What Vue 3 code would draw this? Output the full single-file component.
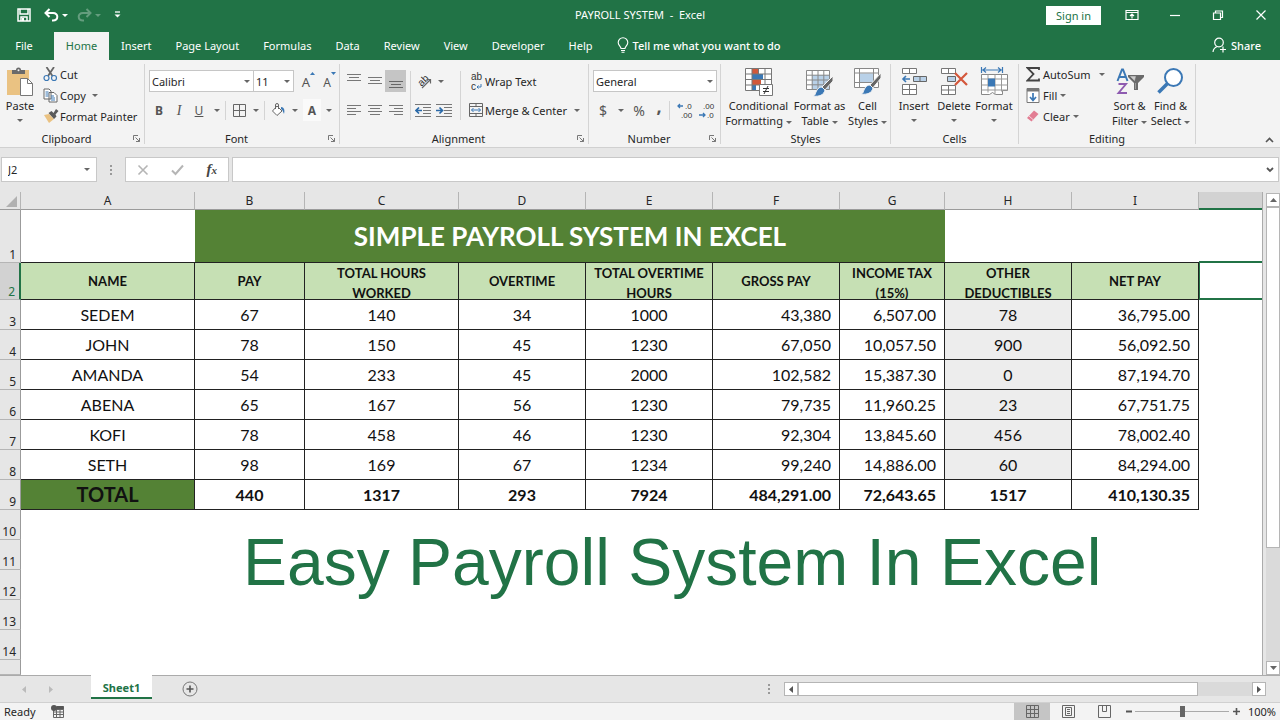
<script setup>
import { ref } from 'vue'

const tabs = ['Insert', 'Page Layout', 'Formulas', 'Data', 'Review', 'View', 'Developer', 'Help']

const columns = ['A', 'B', 'C', 'D', 'E', 'F', 'G', 'H', 'I']

const headings = [
  'NAME', 'PAY', 'TOTAL HOURS WORKED', 'OVERTIME', 'TOTAL OVERTIME HOURS',
  'GROSS PAY', 'INCOME TAX (15%)', 'OTHER DEDUCTIBLES', 'NET PAY',
]

const employees = [
  ['SEDEM', '67', '140', '34', '1000', '43,380', '6,507.00', '78', '36,795.00'],
  ['JOHN', '78', '150', '45', '1230', '67,050', '10,057.50', '900', '56,092.50'],
  ['AMANDA', '54', '233', '45', '2000', '102,582', '15,387.30', '0', '87,194.70'],
  ['ABENA', '65', '167', '56', '1230', '79,735', '11,960.25', '23', '67,751.75'],
  ['KOFI', '78', '458', '46', '1230', '92,304', '13,845.60', '456', '78,002.40'],
  ['SETH', '98', '169', '67', '1234', '99,240', '14,886.00', '60', '84,294.00'],
]

const totals = ['TOTAL', '440', '1317', '293', '7924', '484,291.00', '72,643.65', '1517', '410,130.35']

const emptyRows = [10, 11, 12, 13, 14]

const cellRef = ref('J2')
const formula = ref('')
const zoom = ref(50)

// money columns are right aligned, H is shaded
function cellClass(i) {
  return { money: i === 5 || i === 6 || i === 8, shaded: i === 7 }
}
</script>

<template>
  <div class="excel">
    <header class="title-bar">
      <div class="quick-access">
        <button type="button" aria-label="Save">
          <svg width="14" height="14" viewBox="0 0 14 14"><path d="M1 1h12v12H1zM3 1v5h8V1M4 13V9h6v4" fill="none" stroke="#fff" stroke-width="1.500" /><path d="M5 10h2v3H5z" fill="#fff" /></svg>
        </button>
        <button type="button" class="with-caret" aria-label="Undo">
          <svg width="15" height="14" viewBox="0 0 15 14"><path d="M5.500 1L1.500 5l4 4M2 5h7c6 0 5.500 7.500 0 7.500H8" fill="none" stroke="#fff" stroke-width="2" /></svg>
          <i class="caret light"></i>
        </button>
        <button type="button" class="with-caret faded" aria-label="Redo">
          <svg width="15" height="14" viewBox="0 0 15 14"><path d="M9.500 1l4 4-4 4M13 5H6C0 5 .5 12.500 6 12.500h1" fill="none" stroke="#fff" stroke-width="2" /></svg>
          <i class="caret light"></i>
        </button>
        <button type="button" aria-label="Customize toolbar">
          <svg width="7" height="8" viewBox="0 0 7 8"><path d="M1 1h5" stroke="#fff" stroke-width="1.300" /><path d="M.5 3.500h6l-3 3z" fill="#fff" /></svg>
        </button>
      </div>
      <div class="doc-title">PAYROLL SYSTEM&nbsp; -&nbsp; Excel</div>
      <div class="window-controls">
        <button type="button" class="sign-in">Sign in</button>
        <button type="button" class="win" aria-label="Ribbon display options">
          <svg width="14" height="12" viewBox="0 0 14 12"><path d="M1 1.500h12v9H1zM1 3.500h12M7 9.500V5M5 7l2-2 2 2" fill="none" stroke="#fff" stroke-width="1.200" /></svg>
        </button>
        <button type="button" class="win" aria-label="Minimize">
          <svg width="12" height="12" viewBox="0 0 12 12"><path d="M1 6.500h10" stroke="#fff" stroke-width="1.200" /></svg>
        </button>
        <button type="button" class="win" aria-label="Restore">
          <svg width="12" height="12" viewBox="0 0 12 12"><path d="M1.500 4h7v6.500h-7zM3.500 4V2h7v6.500h-2" fill="none" stroke="#fff" stroke-width="1.200" /></svg>
        </button>
        <button type="button" class="win" aria-label="Close">
          <svg width="12" height="12" viewBox="0 0 12 12"><path d="M1.500 1.500l9 9M10.500 1.500l-9 9" stroke="#fff" stroke-width="1.200" /></svg>
        </button>
      </div>
    </header>

    <nav class="tabs">
      <button type="button" class="tab file">File</button>
      <button type="button" class="tab active">Home</button>
      <button v-for="tab in tabs" :key="tab" type="button" class="tab">{{ tab }}</button>
      <button type="button" class="tab tell-me">
        <svg width="12" height="16" viewBox="0 0 12 16"><path d="M4 11.500c0-2-2.800-3-2.800-6a4.800 4.800 0 0 1 9.600 0c0 3-2.800 4-2.800 6zM4 13.500h4M4.500 15.300h3" fill="none" stroke="#fff" stroke-width="1.100" /></svg>
        Tell me what you want to do
      </button>
      <button type="button" class="tab share">
        <svg width="15" height="16" viewBox="0 0 15 16"><circle cx="7" cy="5.500" r="4.300" fill="none" stroke="#fff" stroke-width="1.200" /><path d="M1 15c.3-3 2-4.800 4.500-5.500M8 12.500h6M11 9.500v6" fill="none" stroke="#fff" stroke-width="1.200" /></svg>
        Share
      </button>
    </nav>

    <section class="ribbon">
      <div class="group clipboard">
        <div class="group-body">
          <button type="button" class="big">
            <svg width="28" height="30" viewBox="0 0 28 30"><path d="M1 3h22v25H1z" fill="#eac282" /><path d="M6 3h4a2.500 2.500 0 0 1 5 0h4v4H6z" fill="#6a6a6a" /><circle cx="12.500" cy="3.300" r="1" fill="#f3f3f3" /><path d="M14.500 11.500h7l5 5v12h-12z" fill="#fff" stroke="#777" /><path d="M21.500 11.500v5h5" fill="none" stroke="#777" /></svg>
            <span>Paste</span>
            <i class="caret"></i>
          </button>
          <div class="stack">
            <button type="button" class="small">
              <svg width="16" height="15" viewBox="0 0 16 15"><path d="M3.500 0l6 9M11 0L5 9" stroke="#666" stroke-width="1.800" /><circle cx="3.500" cy="11" r="2.500" fill="none" stroke="#3b78b5" stroke-width="1.200" /><circle cx="11" cy="11" r="2.500" fill="none" stroke="#3b78b5" stroke-width="1.200" /></svg>
              Cut
            </button>
            <button type="button" class="small">
              <svg width="16" height="15" viewBox="0 0 16 15"><path d="M1 1h5l2 2v8H1zM6 4.500h5l3 3V14H6z" fill="#fff" stroke="#666" /><path d="M2.500 4h3M2.500 6h3M2.500 8h3M8 8h3M8 10h4M8 12h4" stroke="#3b78b5" /></svg>
              Copy <i class="caret gap"></i>
            </button>
            <button type="button" class="small">
              <svg width="16" height="15" viewBox="0 0 16 15"><path d="M1 6l5-1 5 5-5 4z" fill="#eac282" /><path d="M5.500 4l3-2 2 2L13 0l2.500 2-3 3.500 1 2-2.500 2.500z" fill="#5a5a5a" /></svg>
              Format Painter
            </button>
          </div>
        </div>
        <div class="group-label"><span>Clipboard</span><svg class="launcher" width="7" height="7" viewBox="0 0 7 7"><path d="M.5 5V.5H5M2.500 2.500l4 4M6.500 3v3.500H3" fill="none" stroke="#777" /></svg></div>
      </div>

      <div class="group font">
        <div class="group-body rows">
          <div class="tool-row">
            <label class="combo face"><select aria-label="Font"><option>Calibri</option></select><i class="caret"></i></label>
            <label class="combo size"><select aria-label="Font size"><option>11</option></select><i class="caret"></i></label>
            <button type="button" class="tool grow">A<svg width="5" height="3" viewBox="0 0 5 3"><path d="M0 3h5L2.500 0z" fill="#3b78b5" /></svg></button>
            <button type="button" class="tool shrink">A<svg width="5" height="3" viewBox="0 0 5 3"><path d="M0 0h5L2.500 3z" fill="#3b78b5" /></svg></button>
          </div>
          <div class="tool-row">
            <button type="button" class="tool"><b>B</b></button>
            <button type="button" class="tool serif"><em>I</em></button>
            <button type="button" class="tool"><u>U</u></button>
            <i class="caret drop"></i>
            <i class="rule"></i>
            <button type="button" class="tool wide" aria-label="Borders"><svg width="13" height="13" viewBox="0 0 13 13"><path d="M.5.5h12v12H.5zM6.500.5v12M.5 6.500h12" fill="none" stroke="#666" /></svg></button>
            <i class="caret drop"></i>
            <i class="rule"></i>
            <button type="button" class="tool wide" aria-label="Fill color"><svg width="15" height="14" viewBox="0 0 15 14"><path d="M6 3l5 5-5 4.500L1.500 8z" fill="#fff" stroke="#666" /><path d="M4.500 6V2a1.500 1.500 0 0 1 3 0v4" fill="none" stroke="#666" /><path d="M10 4c3 0 4 3 3 7-1-2-1-4-3-5z" fill="#3b78b5" /></svg></button>
            <i class="caret drop"></i>
            <button type="button" class="tool wide font-color"><b>A</b></button>
            <i class="caret drop"></i>
          </div>
        </div>
        <div class="group-label"><span>Font</span><svg class="launcher" width="7" height="7" viewBox="0 0 7 7"><path d="M.5 5V.5H5M2.500 2.500l4 4M6.500 3v3.500H3" fill="none" stroke="#777" /></svg></div>
      </div>

      <div class="group alignment">
        <div class="group-body">
          <div class="align-grid">
            <button type="button" aria-label="Top align"><svg width="14" height="14" viewBox="0 0 14 14"><path d="M0 .5h14M2 3.500h10M0 6.500h14" stroke="#777" /></svg></button>
            <button type="button" aria-label="Middle align"><svg width="14" height="14" viewBox="0 0 14 14"><path d="M0 3.500h14M2 6.500h10M0 9.500h14" stroke="#777" /></svg></button>
            <button type="button" class="on" aria-label="Bottom align"><svg width="14" height="14" viewBox="0 0 14 14"><path d="M0 7.500h14M2 10.500h10M0 13.500h14" stroke="#666" /></svg></button>
            <button type="button" aria-label="Align left"><svg width="14" height="12" viewBox="0 0 14 12"><path d="M0 1.500h14M0 4.500h9M0 7.500h14M0 10.500h9" stroke="#777" /></svg></button>
            <button type="button" aria-label="Center"><svg width="14" height="12" viewBox="0 0 14 12"><path d="M0 1.500h14M2 4.500h10M0 7.500h14M2 10.500h10" stroke="#777" /></svg></button>
            <button type="button" aria-label="Align right"><svg width="14" height="12" viewBox="0 0 14 12"><path d="M0 1.500h14M5 4.500h9M0 7.500h14M5 10.500h9" stroke="#777" /></svg></button>
          </div>
          <i class="rule tall"></i>
          <div class="indent-col">
            <div class="tool-row">
              <button type="button" class="orient"><svg width="18" height="18" viewBox="0 0 18 18"><text x="3" y="12" transform="rotate(-45 8 9)">ab</text><path d="M7 16l8-8M11.500 7.500h4v4" fill="none" stroke="#666" stroke-width="1.200" /></svg></button>
              <i class="caret"></i>
            </div>
            <div class="tool-row">
              <button type="button" aria-label="Decrease indent"><svg width="16" height="13" viewBox="0 0 16 13"><path d="M0 .5h16M8 3.500h8M8 6.500h8M8 9.500h8M0 12.500h16" stroke="#777" /><path d="M7 6.500H1.500M4 3.500l-3 3 3 3" fill="none" stroke="#2a69a8" stroke-width="1.700" /></svg></button>
              <button type="button" aria-label="Increase indent"><svg width="16" height="13" viewBox="0 0 16 13"><path d="M0 .5h16M8 3.500h8M8 6.500h8M8 9.500h8M0 12.500h16" stroke="#777" /><path d="M0 6.500h6M3.500 3.500l3 3-3 3" fill="none" stroke="#2a69a8" stroke-width="1.700" /></svg></button>
            </div>
          </div>
          <i class="rule tall"></i>
          <div class="wrap-col">
            <button type="button" class="small">
              <svg class="glyph-icon" width="14" height="21" viewBox="0 0 14 21"><text x="2" y="9">ab</text><text x="2" y="19">c</text><path d="M12 13v3H8M9.500 14.500L8 16l1.500 1.500" fill="none" stroke="#3b78b5" /></svg>
              Wrap Text
            </button>
            <button type="button" class="small">
              <svg width="14" height="14" viewBox="0 0 14 14"><path d="M.5.5h13v13H.5zM.5 3.500h13M.5 10.500h13M7 .5v3M7 10.500v3" fill="none" stroke="#666" /><path d="M2.500 7h9M4.500 5l-2 2 2 2M9.500 5l2 2-2 2" fill="none" stroke="#3b78b5" /></svg>
              Merge &amp; Center <i class="caret gap"></i>
            </button>
          </div>
        </div>
        <div class="group-label"><span>Alignment</span><svg class="launcher" width="7" height="7" viewBox="0 0 7 7"><path d="M.5 5V.5H5M2.500 2.500l4 4M6.500 3v3.500H3" fill="none" stroke="#777" /></svg></div>
      </div>

      <div class="group number">
        <div class="group-body rows">
          <div class="tool-row">
            <label class="combo format"><select aria-label="Number format"><option>General</option></select><i class="caret"></i></label>
          </div>
          <div class="tool-row">
            <button type="button" class="tool big-glyph">$</button>
            <i class="caret drop"></i>
            <button type="button" class="tool big-glyph">%</button>
            <button type="button" class="tool big-glyph comma"><b>,</b></button>
            <i class="rule"></i>
            <button type="button" class="tool decimal" aria-label="Increase decimal"><svg class="small-glyph" width="16" height="20" viewBox="0 0 16 20"><path d="M6 6H1M3 4L1 6l2 2" fill="none" stroke="#3b78b5" stroke-width="1.300" /><text x="8" y="9">.0</text><text x="4" y="18">.00</text></svg></button>
            <button type="button" class="tool decimal" aria-label="Decrease decimal"><svg class="small-glyph" width="16" height="20" viewBox="0 0 16 20"><path d="M0 15h6M4 13l2 2-2 2" fill="none" stroke="#3b78b5" stroke-width="1.300" /><text x="4" y="9">.00</text><text x="8" y="18">.0</text></svg></button>
          </div>
        </div>
        <div class="group-label"><span>Number</span><svg class="launcher" width="7" height="7" viewBox="0 0 7 7"><path d="M.5 5V.5H5M2.500 2.500l4 4M6.500 3v3.500H3" fill="none" stroke="#777" /></svg></div>
      </div>

      <div class="group styles">
        <div class="group-body">
          <button type="button" class="big">
            <svg width="30" height="30" viewBox="0 0 30 30"><path d="M1.500 1.500h26v22h-26z" fill="#fff" /><path d="M8 1.500h6v5.500H8zM8 13h9v5H8z" fill="#d1583a" /><path d="M8 7h11v6H8zM8 18h4v5.500H8z" fill="#3b78b5" /><path d="M1.500 1.500h26v22h-26zM8 1.500v22M14.500 1.500v5.500M21 1.500v22M1.500 7h26M1.500 12.500h26M1.500 18h26" fill="none" stroke="#777" /><path d="M15.500 17.500h13v11h-13z" fill="#fff" stroke="#777" /><path d="M19 21.500h6M19 24.500h6M24 19l-4 8" stroke="#333" /></svg>
            <span>Conditional</span>
            <span>Formatting <i class="caret"></i></span>
          </button>
          <button type="button" class="big">
            <svg width="30" height="30" viewBox="0 0 30 30"><path d="M1.500 3.500h23v19h-23z" fill="#fff" /><path d="M7 8h18v15H7z" fill="#b9d1e8" /><path d="M1.500 3.500h23v19h-23zM7.200 3.500v19M13 3.500v19M18.800 3.500v19M1.500 8.200h23M1.500 13h23M1.500 17.800h23" fill="none" stroke="#888" /><path d="M28 9v5l-9 10-3-3z" fill="#666" stroke="#f3f3f3" /><path d="M17 20l3 3c-1 5-6 7-12 6 3-1 2-3 4-6 1-2 3-3 5-3z" fill="#3b78b5" stroke="#f3f3f3" /></svg>
            <span>Format as</span>
            <span>Table <i class="caret"></i></span>
          </button>
          <button type="button" class="big">
            <svg width="30" height="30" viewBox="0 0 30 30"><path d="M1.500 1.500h24v19h-24z" fill="#fff" /><path d="M6.500 6.500h14v9h-14z" fill="#b9d1e8" /><path d="M1.500 1.500h24v19h-24zM6.500 1.500v19M20.500 1.500v19M1.500 6h24M1.500 15.500h24" fill="none" stroke="#888" /><path d="M28 6v5l-9 11-3-3z" fill="#666" stroke="#f3f3f3" /><path d="M17 18l3 3c-1 5-6 7-12 6 3-1 2-3 4-6 1-2 3-3 5-3z" fill="#3b78b5" stroke="#f3f3f3" /></svg>
            <span>Cell</span>
            <span>Styles <i class="caret"></i></span>
          </button>
        </div>
        <div class="group-label"><span>Styles</span></div>
      </div>

      <div class="group cells">
        <div class="group-body">
          <button type="button" class="big">
            <svg width="28" height="30" viewBox="0 0 28 30"><path d="M2.500 1.500h14v5h-14zM9.500 1.500v5M2.500 17.500h14v10h-14zM9.500 17.500v10M2.500 22.500h14" fill="#fff" stroke="#777" /><path d="M13.500 9.500h13v5h-13zM20 9.500v5" fill="#b9d1e8" stroke="#666" /><path d="M10 12H3M6 9l-3 3 3 3" fill="none" stroke="#3b78b5" stroke-width="1.600" /></svg>
            <span>Insert</span>
            <i class="caret"></i>
          </button>
          <button type="button" class="big">
            <svg width="28" height="30" viewBox="0 0 28 30"><path d="M1.500 1.500h14v5h-14zM8.500 1.500v5M1.500 18.500h14v9h-14zM8.500 18.500v9M1.500 23h14" fill="#fff" stroke="#777" /><path d="M7.500 9.500h8v5h-8z" fill="#b9d1e8" stroke="#666" /><path d="M15 6l12 12M27 6L15 18" stroke="#d4573b" stroke-width="2.200" /></svg>
            <span>Delete</span>
            <i class="caret"></i>
          </button>
          <button type="button" class="big">
            <svg width="28" height="30" viewBox="0 0 28 30"><path d="M1.500 0v6M22.500 0v6M2 3h20M6 .5L3 3l3 2.500M18 .5L21 3l-3 2.500" fill="none" stroke="#3b78b5" stroke-width="1.200" /><path d="M1.500 7.500h26v16h-5v4h-7l-3-2-3 2h-8z" fill="#fff" stroke="#888" /><path d="M8 7.500v18M15 7.500v20M21.500 7.500v17M1.500 12h26M1.500 18h26M1.500 23h26" fill="none" stroke="#999" /><path d="M8 11.500h7v8H8z" fill="#3b78b5" /></svg>
            <span>Format</span>
            <i class="caret"></i>
          </button>
        </div>
        <div class="group-label"><span>Cells</span></div>
      </div>

      <div class="group editing">
        <div class="group-body">
          <div class="stack">
            <button type="button" class="small">
              <svg width="14" height="15" viewBox="0 0 14 15"><path d="M13 3V1H1.500l6 6-6 6.500H13v-2" fill="none" stroke="#444" stroke-width="1.800" /></svg>
              AutoSum <i class="caret gap"></i>
            </button>
            <button type="button" class="small">
              <svg width="14" height="15" viewBox="0 0 14 15"><path d="M1 .5h12v14H1z" fill="#fff" stroke="#777" /><path d="M1 .5h12v3H1z" fill="#777" /><path d="M7 5v7.500M4 9l3 3.500L10 9" fill="none" stroke="#3b78b5" stroke-width="1.700" /></svg>
              Fill <i class="caret"></i>
            </button>
            <button type="button" class="small">
              <svg width="14" height="15" viewBox="0 0 14 15"><path d="M8 1.500L12.500 5l-7 7.500L1 9z" fill="#e27d93" /><path d="M3 7l4.500 4" stroke="#f6d5dc" /></svg>
              Clear <i class="caret"></i>
            </button>
          </div>
          <button type="button" class="big">
            <svg width="28" height="30" viewBox="0 0 28 30"><path d="M1.500 14L6 2.500h1L11.500 14M3 10h7" fill="none" stroke="#3b78b5" stroke-width="2" /><path d="M2.500 17h7.500L2.500 26H11" fill="none" stroke="#8e5bb0" stroke-width="1.900" /><path d="M12 8h16v2l-6 6v7h-4v-7l-6-6z" fill="#6a6a6a" /><path d="M14.500 9.500h5l-1 4zM19.500 16v6" fill="#ccc" stroke="#ccc" stroke-width=".5" /></svg>
            <span>Sort &amp;</span>
            <span>Filter <i class="caret"></i></span>
          </button>
          <button type="button" class="big">
            <svg width="28" height="30" viewBox="0 0 28 30"><circle cx="16.500" cy="10.500" r="8.500" fill="#fff" stroke="#3b78b5" stroke-width="2" /><path d="M10.500 16.500l-9 9" stroke="#3b78b5" stroke-width="3.600" /></svg>
            <span>Find &amp;</span>
            <span>Select <i class="caret"></i></span>
          </button>
        </div>
        <div class="group-label"><span>Editing</span></div>
      </div>

      <button type="button" class="collapse" aria-label="Collapse ribbon">
        <svg width="9" height="6" viewBox="0 0 9 6"><path d="M1 5l3.500-3.500L8 5" fill="none" stroke="#555" stroke-width="1.600" /></svg>
      </button>
    </section>

    <section class="formula-bar">
      <label class="name-box"><input v-model="cellRef" aria-label="Name box" /><i class="caret"></i></label>
      <i class="dots"></i>
      <div class="fx-buttons">
        <button type="button" aria-label="Cancel"><svg width="12" height="12" viewBox="0 0 12 12"><path d="M1.500 1.500l9 9M10.500 1.500l-9 9" stroke="#b5b5b5" stroke-width="1.600" /></svg></button>
        <button type="button" aria-label="Enter"><svg width="13" height="12" viewBox="0 0 13 12"><path d="M1 6.500L4.500 10 12 1.500" fill="none" stroke="#b5b5b5" stroke-width="2" /></svg></button>
        <button type="button" class="fx"><i>f<small>x</small></i></button>
      </div>
      <label class="formula"><input v-model="formula" aria-label="Formula" /><svg width="8" height="6" viewBox="0 0 8 6"><path d="M1 1l3 3 3-3" fill="none" stroke="#555" stroke-width="1.800" /></svg></label>
    </section>

    <main class="workspace">
      <div class="sheet">
        <table>
          <colgroup>
            <col class="c-head" /><col class="c-a" /><col class="c-b" /><col class="c-c" />
            <col class="c-mid" /><col class="c-mid" /><col class="c-mid" /><col class="c-g" />
            <col class="c-mid" /><col class="c-mid" /><col />
          </colgroup>
          <thead>
            <tr class="letters">
              <th class="corner"><svg width="11" height="11" viewBox="0 0 11 11"><path d="M11 0v11H0z" fill="#b1b1b1" /></svg></th>
              <th v-for="col in columns" :key="col">{{ col }}</th>
              <th class="current"></th>
            </tr>
          </thead>
          <tbody>
            <tr class="banner-row">
              <th class="row-head">1</th>
              <td></td>
              <td colspan="6" class="banner">SIMPLE PAYROLL SYSTEM IN EXCEL</td>
              <td></td>
              <td></td>
              <td></td>
            </tr>
            <tr class="heading-row">
              <th class="row-head current">2</th>
              <td v-for="h in headings" :key="h" class="heading"><div class="clip">{{ h }}</div></td>
              <td class="selected"></td>
            </tr>
            <tr v-for="(row, r) in employees" :key="row[0]" class="data-row">
              <th class="row-head">{{ r + 3 }}</th>
              <td v-for="(value, i) in row" :key="i" class="cell" :class="cellClass(i)">{{ value }}</td>
              <td></td>
            </tr>
            <tr class="data-row total-row">
              <th class="row-head">9</th>
              <td v-for="(value, i) in totals" :key="i" class="cell" :class="{ money: cellClass(i).money }">{{ value }}</td>
              <td></td>
            </tr>
            <tr v-for="n in emptyRows" :key="n" class="data-row">
              <th class="row-head">{{ n }}</th>
              <td colspan="10"></td>
            </tr>
            <tr class="last-row">
              <th class="row-head"></th>
              <td colspan="10"></td>
            </tr>
          </tbody>
        </table>
        <!-- text box floating over the empty rows -->
        <div class="text-box">Easy Payroll System In Excel</div>
      </div>
      <div class="v-scroll">
        <button type="button" aria-label="Scroll up"><svg width="7" height="4" viewBox="0 0 7 4"><path d="M0 4h7L3.500 0z" fill="#666" /></svg></button>
        <div class="v-track"><div class="v-thumb"></div></div>
        <button type="button" aria-label="Scroll down"><svg width="7" height="4" viewBox="0 0 7 4"><path d="M0 0h7L3.500 4z" fill="#666" /></svg></button>
      </div>
    </main>

    <div class="sheet-bar">
      <div class="sheet-nav">
        <button type="button" aria-label="Previous sheet"><svg width="4" height="7" viewBox="0 0 4 7"><path d="M4 0v7L0 3.500z" fill="#bbb" /></svg></button>
        <button type="button" aria-label="Next sheet"><svg width="4" height="7" viewBox="0 0 4 7"><path d="M0 0v7l4-3.500z" fill="#bbb" /></svg></button>
      </div>
      <button type="button" class="sheet-tab">Sheet1</button>
      <button type="button" class="add-sheet" aria-label="New sheet"><svg width="16" height="16" viewBox="0 0 16 16"><circle cx="8" cy="8" r="7" fill="none" stroke="#777" /><path d="M8 4.500v7M4.500 8h7" stroke="#555" stroke-width="1.600" /></svg></button>
      <i class="dots"></i>
      <div class="h-scroll">
        <button type="button" aria-label="Scroll left"><svg width="4" height="7" viewBox="0 0 4 7"><path d="M4 0v7L0 3.500z" fill="#555" /></svg></button>
        <div class="h-track"><div class="h-thumb"></div></div>
        <button type="button" aria-label="Scroll right"><svg width="4" height="7" viewBox="0 0 4 7"><path d="M0 0v7l4-3.500z" fill="#555" /></svg></button>
      </div>
    </div>

    <footer class="status-bar">
      <span>Ready</span>
      <svg class="macro" width="13" height="13" viewBox="0 0 13 13"><path d="M2.500 4.500h10v8h-10zM5.500 1.500h7v3h-7zM2.500 7h10M2.500 9.500h10M5.500 5v7.500M9 5v7.500" fill="none" stroke="#666" /><path d="M6 1h6.500v3H6z" fill="#555" /><circle cx="3" cy="3" r="3" fill="#555" /></svg>
      <div class="views">
        <button type="button" class="on" aria-label="Normal view"><svg width="13" height="13" viewBox="0 0 13 13"><path d="M.5.5h12v12H.5zM4.500.5v12M8.500.5v12M.5 4.500h12M.5 8.500h12" fill="none" stroke="#666" /></svg></button>
        <button type="button" aria-label="Page layout view"><svg width="13" height="13" viewBox="0 0 13 13"><path d="M.5.5h12v12H.5zM3.500 2.500h6v8h-6zM5 4.500h3M5 6.500h3M5 8.500h3" fill="none" stroke="#666" /></svg></button>
        <button type="button" aria-label="Page break view"><svg width="13" height="13" viewBox="0 0 13 13"><path d="M.5.5h12v12H.5zM4.500.5v6h4v-6" fill="none" stroke="#666" /></svg></button>
      </div>
      <button type="button" class="zoom-btn" aria-label="Zoom out"><svg width="7" height="7" viewBox="0 0 7 7"><path d="M0 3.500h6" stroke="#555" stroke-width="2" /></svg></button>
      <input v-model="zoom" class="zoom" type="range" min="0" max="100" aria-label="Zoom" />
      <button type="button" class="zoom-btn" aria-label="Zoom in"><svg width="7" height="7" viewBox="0 0 7 7"><path d="M0 3.500h7M3.500 0v7" stroke="#555" stroke-width="1.600" /></svg></button>
      <span class="zoom-value">100%</span>
    </footer>
  </div>
</template>

<style>
body {
  margin: 0;
}
</style>

<style scoped>
.excel {
  display: flex;
  flex-direction: column;
  min-height: 100vh;
  overflow: hidden;
  color: #262626;
  background: #e6e6e6;
  font-family: "Noto Sans", "Open Sans", sans-serif;
  font-size: 11px;
  line-height: 15px;
}

.excel * {
  box-sizing: border-box;
}

button,
input,
select {
  margin: 0;
  padding: 0;
  border: 0;
  color: inherit;
  background: none;
  font: inherit;
}

button {
  display: flex;
  align-items: center;
  justify-content: center;
  white-space: nowrap;
}

svg {
  display: block;
  flex: none;
}

.caret {
  display: inline-block;
  flex: none;
  border: 3px solid transparent;
  border-top-color: #666;
  border-bottom: 0;
  vertical-align: middle;
}

.caret.light {
  border-top-color: #fff;
}

.caret.gap {
  margin-left: 5px;
}

.caret.drop {
  margin: 0 5px;
}

/* title bar */
.title-bar {
  display: grid;
  grid-template-columns: 1fr auto 1fr;
  align-items: center;
  height: 30px;
  color: #fff;
  background: #217346;
}

.quick-access {
  display: flex;
  align-items: center;
  gap: 13px;
  padding-left: 17px;
}

.with-caret {
  gap: 3px;
}

.quick-access .with-caret + .with-caret {
  margin-left: -4px;
}

.faded {
  opacity: 0.3;
}

.doc-title {
  padding-bottom: 1px;
}

.window-controls {
  display: flex;
  align-items: center;
  justify-content: flex-end;
  gap: 15px;
  padding-right: 5px;
}

.sign-in {
  width: 55px;
  height: 19px;
  margin-right: 2px;
  color: #217346;
  background: #fff;
}

.win {
  width: 28px;
  height: 28px;
}

/* tabs */
.tabs {
  display: flex;
  height: 30px;
  padding-top: 2px;
  color: #fff;
  background: #217346;
}

.tab {
  padding: 0 12px 2px;
}

.tab.file {
  width: 54px;
  padding: 0 6px 2px 0;
}

.tab.active {
  width: 55px;
  color: #217346;
  background: #f3f3f3;
}

.tell-me,
.share {
  gap: 4px;
  font-weight: 500;
}

.share {
  margin-left: auto;
  padding-right: 19px;
}

/* ribbon */
.ribbon {
  display: flex;
  height: 88px;
  padding-top: 4px;
  border-bottom: 1px solid #d0d0d0;
  background: #f3f3f3;
}

.group {
  display: flex;
  flex: none;
  flex-direction: column;
  height: 80px;
  border-right: 1px solid #d4d4d4;
}

.group-body {
  display: flex;
  flex: 1;
  align-items: flex-start;
}

.group-label {
  display: flex;
  align-items: center;
  height: 15px;
  margin-bottom: -2px;
}

.group-label span {
  flex: 1;
  text-align: center;
}

.launcher {
  margin-right: 4px;
}

.clipboard {
  width: 145px;
}

.font {
  width: 195px;
}

.alignment {
  width: 249px;
}

.number {
  width: 132px;
}

.styles {
  width: 170px;
}

.cells {
  width: 128px;
}

.editing {
  width: 177px;
}

.big {
  flex-direction: column;
  flex: none;
  padding: 3px 4px 0;
}

.big svg {
  margin-bottom: 1px;
}

.big > .caret {
  margin-top: 6px;
}

.clipboard .big {
  width: 40px;
}

.styles .group-body {
  padding-left: 2px;
}

.styles .big {
  width: 45px;
}

.styles .big:first-child {
  width: 71px;
}

.styles .big:nth-child(2) {
  width: 51px;
}

.cells .group-body {
  padding-left: 3px;
}

.cells .big {
  width: 40px;
}

.stack {
  display: grid;
  padding-left: 3px;
}

.editing .stack {
  width: 90px;
  padding-left: 7px;
}

.editing .big {
  width: 41px;
}

.small {
  justify-content: flex-start;
  gap: 3px;
  height: 22px;
}

.stack .small {
  height: 21px;
}

.clipboard .small {
  gap: 1px;
}

.rows {
  flex-direction: column;
  gap: 7px;
  padding: 6px 3px 0 4px;
}

.tool-row {
  display: flex;
  align-items: center;
  height: 22px;
}

.combo {
  display: grid;
  align-items: center;
  height: 22px;
  border: 1px solid #c6c6c6;
  background: #fff;
}

.combo select {
  grid-area: 1 / 1;
  width: 100%;
  padding-left: 2px;
  appearance: none;
}

.combo .caret {
  grid-area: 1 / 1;
  justify-self: end;
  margin-right: 3px;
  pointer-events: none;
}

.combo.face {
  width: 105px;
}

.combo.size {
  width: 41px;
  margin-left: -1px;
}

.combo.format {
  width: 124px;
}

.tool {
  width: 20px;
  height: 22px;
  color: #555;
  font-size: 12px;
}

.tool.wide {
  width: 18px;
}

.grow,
.shrink {
  width: 21px;
  padding-top: 2px;
}

.grow svg,
.shrink svg {
  align-self: flex-start;
}

.grow {
  margin-left: 4px;
  font-size: 13px;
}

.serif {
  font-family: "Liberation Serif", serif;
  font-size: 14px;
}

.font-color {
  background: #fafafa;
}

.big-glyph {
  font-size: 14px;
}

.big-glyph.comma {
  padding-bottom: 8px;
  font-size: 18px;
}

.decimal {
  width: 22px;
}

svg text {
  fill: #333;
  font-family: "Liberation Sans", Arial, sans-serif;
  font-size: 10px;
}

.small-glyph text {
  font-size: 8px;
}

.rule {
  width: 1px;
  height: 19px;
  margin-right: 4px;
  background: #d4d4d4;
}

.rule.tall {
  height: 49px;
  margin: 7px 4px 0;
}

.align-grid {
  display: grid;
  grid-template: 22px 22px / repeat(3, 21px);
  row-gap: 7px;
  padding: 6px 0 0 3px;
}

.align-grid .on {
  background: #c5c5c5;
}

.indent-col {
  display: grid;
  gap: 7px;
  width: 41px;
  padding-top: 6px;
}

.indent-col .tool-row {
  gap: 5px;
}

.wrap-col {
  display: grid;
  gap: 7px;
  padding: 6px 0 0 4px;
}

.wrap-col .small {
  gap: 2px;
}

.collapse {
  align-self: flex-end;
  margin: 0 6px 4px auto;
}

/* formula bar */
.formula-bar {
  display: flex;
  align-items: center;
  height: 25px;
  margin: 9px 1px 10px;
}

.name-box {
  display: flex;
  align-items: center;
  width: 96px;
  height: 25px;
  padding: 0 6px;
  border: 1px solid #c8c8c8;
  background: #fff;
}

.name-box input {
  flex: 1;
  min-width: 0;
}

.dots {
  width: 2px;
  height: 10px;
  background: repeating-linear-gradient(#999 0 2px, transparent 2px 4px);
}

.formula-bar .dots {
  margin: 0 13px;
}

.fx-buttons {
  display: flex;
  align-items: center;
  justify-content: space-around;
  width: 104px;
  height: 25px;
  margin-right: 3px;
  border: 1px solid #c8c8c8;
  background: #fff;
}

.fx {
  color: #444;
  font-family: "Liberation Serif", serif;
  font-size: 15px;
  font-weight: 700;
}

.fx small {
  font-size: 11px;
}

.formula {
  display: flex;
  flex: 1;
  align-items: center;
  height: 25px;
  padding: 0 4px;
  border: 1px solid #c8c8c8;
  background: #fff;
}

.formula input {
  flex: 1;
}

input:focus {
  outline: none;
}

/* sheet */
.workspace {
  display: flex;
  flex: 1;
  border-bottom: 1px solid #ababab;
}

.sheet {
  position: relative;
  flex: 1;
  border-right: 1px solid #ababab;
  background: #fff;
}

table {
  width: 100%;
  border-spacing: 0;
  table-layout: fixed;
}

th,
td {
  padding: 0;
}

.c-head {
  width: 21px;
}

.c-a {
  width: 174px;
}

.c-b {
  width: 110px;
}

.c-c {
  width: 154px;
}

.c-mid {
  width: 127px;
}

.c-g {
  width: 105px;
}

.letters th {
  height: 18px;
  border-right: 1px solid #b5b5b5;
  border-bottom: 1px solid #9b9b9b;
  background: #e6e6e6;
  font-size: 12px;
  font-weight: 400;
}

.letters .current {
  border-right: 0;
  border-bottom: 2px solid #217346;
  background: #d2d2d2;
}

.corner svg {
  margin: 2px 3px 0 auto;
}

.row-head {
  overflow: hidden;
  padding-right: 4px;
  border-right: 1px solid #9b9b9b;
  border-bottom: 1px solid #b5b5b5;
  background: #e6e6e6;
  font-size: 12px;
  font-weight: 400;
  text-align: right;
  vertical-align: bottom;
}

.row-head.current {
  border-right: 2px solid #217346;
  color: #217346;
  background: #d2d2d2;
}

.banner-row > * {
  height: 53px;
}

.banner-row td {
  border-bottom: 1px solid #222;
}

.banner-row td:last-child {
  border-bottom: 2px solid #217346;
}

.banner {
  color: #fff;
  background: #548235;
  font-family: Lato, sans-serif;
  font-size: 26px;
  font-weight: 700;
  text-align: center;
}

.heading-row > * {
  height: 37px;
}

.heading {
  padding: 0 4px;
  border-right: 1px solid #222;
  border-bottom: 1px solid #222;
  color: #111;
  background: #c6e0b4;
  font-family: Lato, sans-serif;
  font-size: 13px;
  font-weight: 700;
  line-height: 20px;
  text-align: center;
}

/* two-line headings are cut off by the row height */
.clip {
  overflow: hidden;
  max-height: 36px;
}

.selected {
  border-bottom: 2px solid #217346;
  border-left: 1px solid #217346;
}

.data-row > * {
  height: 30px;
}

.cell {
  border-right: 1px solid #222;
  border-bottom: 1px solid #222;
  color: #111;
  font-family: Lato, sans-serif;
  font-size: 16px;
  text-align: center;
}

.cell.money {
  padding-right: 8px;
  text-align: right;
}

.cell.shaded {
  background: #ededed;
}

.total-row .cell {
  font-weight: 700;
}

.total-row .cell:nth-child(2) {
  background: #548235;
  font-size: 20px;
}

.last-row > * {
  height: 15px;
}

.text-box {
  position: absolute;
  top: 332px;
  left: 243px;
  color: #217346;
  font-family: "Liberation Sans", Arial, sans-serif;
  font-size: 66px;
  line-height: 76px;
  white-space: nowrap;
}

.v-scroll {
  display: flex;
  flex-direction: column;
  width: 14px;
  margin: 1px 0 0 3px;
}

.v-scroll button,
.h-scroll button {
  flex: none;
  width: 14px;
  height: 14px;
  border: 1px solid #b5b5b5;
  background: #fff;
}

.v-track {
  flex: 1;
  background: #dadada;
}

.v-thumb {
  height: 75%;
  border: 1px solid #b5b5b5;
  background: #fff;
}

/* sheet tabs */
.sheet-bar {
  display: flex;
  align-items: center;
  height: 26px;
}

.sheet-nav {
  display: flex;
  gap: 23px;
  width: 91px;
  padding-left: 22px;
}

.sheet-tab {
  align-self: flex-start;
  width: 61px;
  height: 24px;
  margin-top: -1px;
  padding-top: 3px;
  border-bottom: 2px solid #217346;
  color: #217346;
  background: #fff;
  font-weight: 700;
}

.add-sheet {
  margin-left: 30px;
}

.sheet-bar .dots {
  margin: 0 14px 0 auto;
}

.h-scroll {
  display: flex;
  width: 482px;
  margin-right: 14px;
}

.h-track {
  flex: 1;
  height: 14px;
  background: #dadada;
}

.h-thumb {
  width: 88%;
  height: 14px;
  border: 1px solid #b5b5b5;
  background: #fff;
}

/* status bar */
.status-bar {
  display: flex;
  align-items: center;
  height: 18px;
  padding: 0 4px;
  border-top: 1px solid #d0d0d0;
  background: #f3f3f3;
}

.macro {
  margin-left: 15px;
}

.views {
  display: flex;
  margin-left: auto;
}

.views button {
  width: 36px;
  height: 18px;
}

.views .on {
  background: #c5c5c5;
}

.zoom-btn {
  width: 11px;
  margin-left: 2px;
}

.zoom {
  width: 94px;
  height: 12px;
  background: linear-gradient(#aaa, #aaa) center / 100% 1px no-repeat;
  appearance: none;
}

.zoom::-webkit-slider-thumb {
  width: 5px;
  height: 11px;
  background: #666;
  appearance: none;
}

.zoom-value {
  width: 34px;
  text-align: right;
}
</style>
